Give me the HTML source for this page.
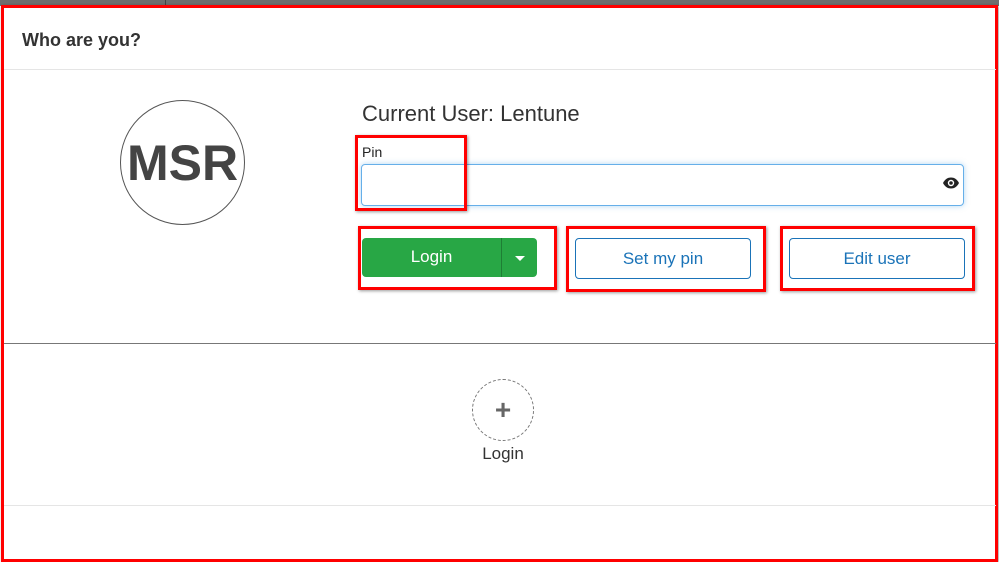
<!DOCTYPE html>
<html><head><style>
body{margin:0;width:999px;height:562px;overflow:hidden;background:#6e6e6e;font-family:"Liberation Sans",Arial,sans-serif;position:relative}
.abs{position:absolute}
.red{position:absolute;border:3px solid #f00;box-sizing:border-box;box-shadow:1px 1px 3px rgba(0,0,0,.4)}
</style></head><body>
<div class="abs" style="left:165px;top:0;width:1px;height:6px;background:#444"></div>
<div class="abs" style="left:0;top:6px;width:999px;height:556px;background:#fff"></div>
<div class="red" style="left:1px;top:5px;width:997px;height:557px"></div>
<div class="abs" style="left:22px;top:30px;font-size:18px;font-weight:bold;color:#333">Who are you?</div>
<div class="abs" style="left:4px;top:69px;width:992px;height:1px;background:#e5e5e5"></div>
<div class="abs" style="left:120px;top:100px;width:123px;height:123px;border:1px solid #555;border-radius:50%;display:flex;align-items:center;justify-content:center;font-size:50px;font-weight:bold;color:#444">MSR</div>
<div class="abs" style="left:362px;top:101px;font-size:22px;color:#333">Current User: Lentune</div>
<div class="abs" style="left:362px;top:144px;font-size:14px;color:#222">Pin</div>
<div class="abs" style="left:361px;top:164px;width:603px;height:42px;border:1px solid #66afe9;border-radius:4px;box-sizing:border-box;box-shadow:0 0 6px rgba(102,175,233,.5)"></div>
<svg class="abs" style="left:943px;top:177px" width="16" height="12" viewBox="0 0 16 12"><path d="M0 6C2 2 5 0.5 8 0.5S14 2 16 6C14 10 11 11.5 8 11.5S2 10 0 6Z" fill="#222"/><circle cx="8" cy="6" r="3.2" fill="#fff"/><circle cx="8" cy="6" r="1.8" fill="#222"/></svg>
<div class="red" style="left:355px;top:135px;width:112px;height:76px"></div>
<div class="abs" style="left:362px;top:238px;width:175px;height:39px;background:#28a745;border-radius:4px"></div>
<div class="abs" style="left:501px;top:238px;width:1px;height:39px;background:#1e7e34"></div>
<div class="abs" style="left:362px;top:247px;width:139px;text-align:center;color:#fff;font-size:17px">Login</div>
<div class="abs" style="left:515px;top:256px;width:0;height:0;border-left:5px solid transparent;border-right:5px solid transparent;border-top:5px solid #fff"></div>
<div class="red" style="left:358px;top:226px;width:199px;height:64px"></div>
<div class="abs" style="left:575px;top:238px;width:176px;height:41px;border:1px solid #1a73b8;border-radius:4px;box-sizing:border-box;color:#1a73b8;font-size:17px;text-align:center;line-height:39px">Set my pin</div>
<div class="red" style="left:566px;top:226px;width:200px;height:66px"></div>
<div class="abs" style="left:789px;top:238px;width:176px;height:41px;border:1px solid #1a73b8;border-radius:4px;box-sizing:border-box;color:#1a73b8;font-size:17px;text-align:center;line-height:39px">Edit user</div>
<div class="red" style="left:780px;top:226px;width:195px;height:65px"></div>
<div class="abs" style="left:4px;top:343px;width:992px;height:1px;background:#777"></div>
<div class="abs" style="left:472px;top:379px;width:60px;height:60px;border:1px dashed #777;border-radius:50%;display:flex;align-items:center;justify-content:center;font-size:28px;font-weight:bold;color:#666">+</div>
<div class="abs" style="left:472px;top:444px;width:62px;text-align:center;font-size:17px;color:#333">Login</div>
<div class="abs" style="left:4px;top:505px;width:992px;height:1px;background:#e5e5e5"></div>
</body></html>
